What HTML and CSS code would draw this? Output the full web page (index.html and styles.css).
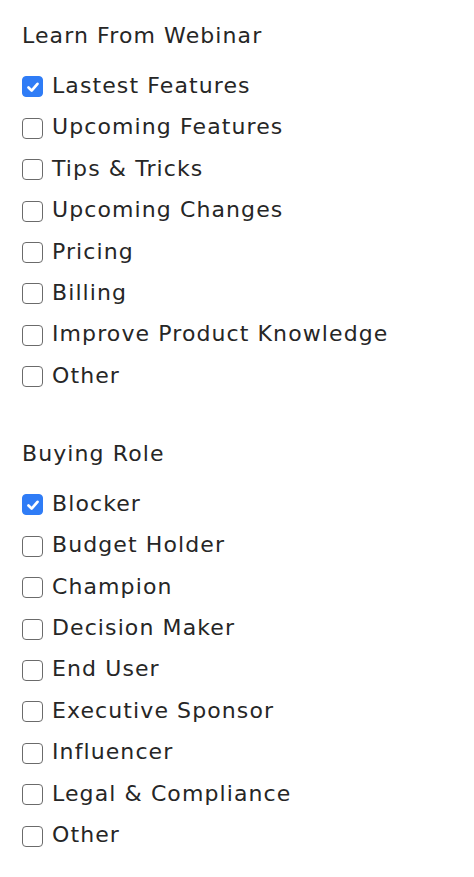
FILE: index.html
```html
<!DOCTYPE html>
<html>
<head>
<meta charset="utf-8">
<link rel="stylesheet" href="styles.css">
</head>
<body>
<section class="group">
  <h2 class="title">Learn From Webinar</h2>
  <ul class="list">
    <li class="item"><span class="box checked"><svg viewBox="0 0 20 20"><path d="M5 10.5 L8.5 14 L15 6.5"/></svg></span><span class="label">Lastest Features</span></li>
    <li class="item"><span class="box"></span><span class="label">Upcoming Features</span></li>
    <li class="item"><span class="box"></span><span class="label">Tips &amp; Tricks</span></li>
    <li class="item"><span class="box"></span><span class="label">Upcoming Changes</span></li>
    <li class="item"><span class="box"></span><span class="label">Pricing</span></li>
    <li class="item"><span class="box"></span><span class="label">Billing</span></li>
    <li class="item"><span class="box"></span><span class="label">Improve Product Knowledge</span></li>
    <li class="item"><span class="box"></span><span class="label">Other</span></li>
  </ul>
</section>
<section class="group second">
  <h2 class="title">Buying Role</h2>
  <ul class="list">
    <li class="item"><span class="box checked"><svg viewBox="0 0 20 20"><path d="M5 10.5 L8.5 14 L15 6.5"/></svg></span><span class="label">Blocker</span></li>
    <li class="item"><span class="box"></span><span class="label">Budget Holder</span></li>
    <li class="item"><span class="box"></span><span class="label">Champion</span></li>
    <li class="item"><span class="box"></span><span class="label">Decision Maker</span></li>
    <li class="item"><span class="box"></span><span class="label">End User</span></li>
    <li class="item"><span class="box"></span><span class="label">Executive Sponsor</span></li>
    <li class="item"><span class="box"></span><span class="label">Influencer</span></li>
    <li class="item"><span class="box"></span><span class="label">Legal &amp; Compliance</span></li>
    <li class="item"><span class="box"></span><span class="label">Other</span></li>
  </ul>
</section>
</body>
</html>
```
FILE: styles.css
```css
html, body {
  margin: 0;
  padding: 0;
  background: #ffffff;
}
body {
  font-family: "DejaVu Sans", sans-serif;
  color: #262626;
  padding: 21px 22px 0 22px;
}
.group {
  display: flex;
  flex-direction: column;
}
.second {
  margin-top: 42.5px;
}
.title {
  margin: 0;
  font-size: 22px;
  letter-spacing: 1.1px;
  font-weight: normal;
  line-height: 30px;
  height: 30px;
}
.list {
  list-style: none;
  margin: 14.3px 0 0 0;
  padding: 0;
}
.item {
  display: flex;
  align-items: center;
  height: 41.4px;
}
.box {
  width: 21px;
  height: 21px;
  box-sizing: border-box;
  border: 1.5px solid #6b6b6b;
  border-radius: 4px;
  margin-right: 9px;
  flex: none;
  display: flex;
  align-items: center;
  justify-content: center;
  position: relative;
  top: 1px;
}
.box.checked {
  background: #2f7cf6;
  border-color: #2f7cf6;
}
.box svg {
  width: 18px;
  height: 18px;
}
.box svg path {
  fill: none;
  stroke: #ffffff;
  stroke-width: 3;
  stroke-linecap: round;
  stroke-linejoin: round;
}
.label {
  font-size: 22px;
  letter-spacing: 1.1px;
  line-height: 30px;
}
```
